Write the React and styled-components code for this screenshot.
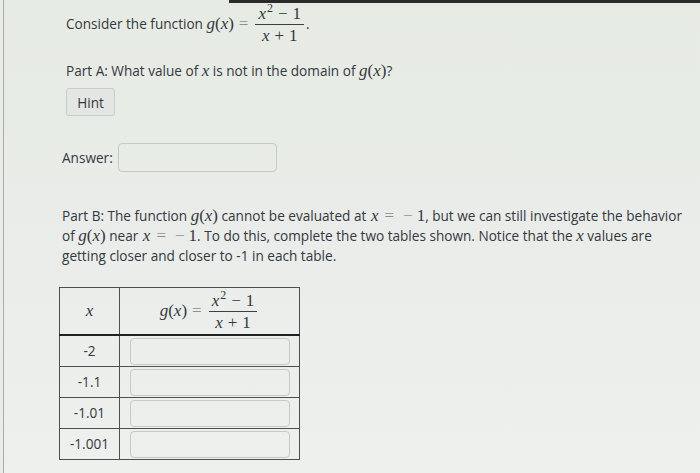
import React from "react";
import styled, { createGlobalStyle } from "styled-components";

const Global = createGlobalStyle`
  html, body { margin: 0; padding: 0; }
  body {
    background: #e9ece7;
    font-family: "Open Sans", "Noto Sans", sans-serif;
    color: #33393e;
    font-size: 13.6px;
  }
`;

const Page = styled.div`
  position: relative;
  width: 697px;
  height: 473px;
  overflow: hidden;
  box-sizing: border-box;
  background: linear-gradient(180deg, #e6ebe3 0%, #e9ece8 45%, #eef0ee 100%);
  border-left: 1px solid #a9aca8;
  margin-left: 3px;
`;

const TopBar = styled.div`
  height: 3px;
  margin-left: 225px;
  background: #2a2a2a;
`;

const Content = styled.div`
  padding: 1px 0 0 58px;
  width: 640px;
  line-height: 20px;
`;

const Upper = styled.div`
  padding-left: 4px;
`;

const Line = styled.div`
  margin: ${(p) => p.$m || "0"};
  display: flex;
  align-items: center;
  white-space: pre;
`;

const M = styled.span`
  font-family: "Liberation Serif", "Times New Roman", serif;
  font-style: ${(p) => (p.$up ? "normal" : "italic")};
  font-size: 17px;
  margin: ${(p) => p.$m || "0 1px"};
`;

const Op = styled.span`
  font-family: "Liberation Serif", serif;
  font-size: 17px;
  margin: 0 ${(p) => (p.$gap === undefined ? 5 : p.$gap)}px;
  color: ${(p) => (p.$light ? "#8a8f92" : "inherit")};
`;

const Frac = styled.span`
  display: inline-flex;
  flex-direction: column;
  align-items: center;
  vertical-align: middle;
  margin: 0 2px;
  font-family: "Liberation Serif", serif;
  font-size: 17px;
  line-height: 17px;
`;

const Num = styled.span`
  padding: 1px 3px 2px;
  border-bottom: 1px solid #3a3f44;
`;

const Den = styled.span`
  padding: 2px 3px 0;
`;

const Sup = styled.sup`
  font-size: 12px;
  font-style: normal;
  line-height: 0;
  margin-left: 1px;
`;

const HintButton = styled.button`
  display: block;
  margin: 7px 0 0 0;
  width: 49px;
  height: 28px;
  background: #e3e6e2;
  border: 1px solid #c9cdc9;
  border-radius: 3px;
  font-family: "Open Sans", sans-serif;
  font-size: 13.6px;
  color: #33393e;
  padding: 0;
`;

const AnswerRow = styled.div`
  display: flex;
  align-items: center;
  gap: 5px;
  margin-top: 27px;
`;

const TextInput = styled.div`
  width: ${(p) => p.$w || 158}px;
  height: ${(p) => p.$h || 28}px;
  border: 1px solid #c6cac6;
  border-radius: 4px;
  background: transparent;
  box-sizing: border-box;
`;

const Para = styled.div`
  margin-top: 34px;
  line-height: 20px;
  white-space: nowrap;
`;

const Table = styled.table`
  margin-top: 21px;
  margin-left: -3px;
  border-collapse: collapse;
  table-layout: fixed;
  width: 238px;
`;

const Th = styled.th`
  border: 1px solid #4a4f52;
  border-bottom: 2px solid #1e2224;
  height: 46px;
  width: ${(p) => p.$w}px;
  font-weight: normal;
  padding: 0;
  text-align: center;
`;

const Td = styled.td`
  border: 1px solid #4a4f52;
  height: 30px;
  padding: 0;
  text-align: center;
  font-size: 13.6px;
`;

const CellInner = styled.div`
  display: flex;
  justify-content: center;
  align-items: center;
`;

const frac = (
  <Frac>
    <Num>
      <M $m="0">x</M>
      <Sup>2</Sup>
      <Op $gap={5}>−</Op>1
    </Num>
    <Den>
      <M $m="0">x</M>
      <Op $gap={5}>+</Op>1
    </Den>
  </Frac>
);

const G = () => (
  <>
    <M $m="0">g</M>
    <M $up $m="0">(</M>
    <M $m="0">x</M>
    <M $up $m="0">)</M>
  </>
);

const MinusOne = () => (
  <>
    <M>x</M>
    <Op $light>=</Op>
    <Op $gap={4} $light>−</Op>
    <M $up $m="0">1</M>
  </>
);

const rows = ["-2", "-1.1", "-1.01", "-1.001"];

export default function App() {
  return (
    <>
      <Global />
      <Page>
        <TopBar />
        <Content>
          <Upper>
            <Line>
              Consider the function <G />
              <Op $light>=</Op>
              {frac}
              <span>.</span>
            </Line>
            <Line $m="17px 0 0 0">
              Part A: What value of <M $m="0">x</M> is not in the domain of <G />?
            </Line>
            <HintButton>Hint</HintButton>
          </Upper>
          <AnswerRow>
            Answer:
            <TextInput $w={159} $h={29} />
          </AnswerRow>
          <Para>
            Part B: The function <G /> cannot be evaluated at <MinusOne />, but we can
            still investigate the behavior
            <br />
            of <G /> near <MinusOne />. To do this, complete the two tables shown. Notice
            that the <M $m="0">x</M> values are
            <br />
            getting closer and closer to -1 in each table.
          </Para>
          <Table>
            <thead>
              <tr>
                <Th $w={59}>
                  <M>x</M>
                </Th>
                <Th $w={179}>
                  <CellInner>
                    <G />
                    <Op $light>=</Op>
                    {frac}
                  </CellInner>
                </Th>
              </tr>
            </thead>
            <tbody>
              {rows.map((r) => (
                <tr key={r}>
                  <Td>{r}</Td>
                  <Td>
                    <CellInner>
                      <TextInput $w={160} $h={27} />
                    </CellInner>
                  </Td>
                </tr>
              ))}
            </tbody>
          </Table>
        </Content>
      </Page>
    </>
  );
}
